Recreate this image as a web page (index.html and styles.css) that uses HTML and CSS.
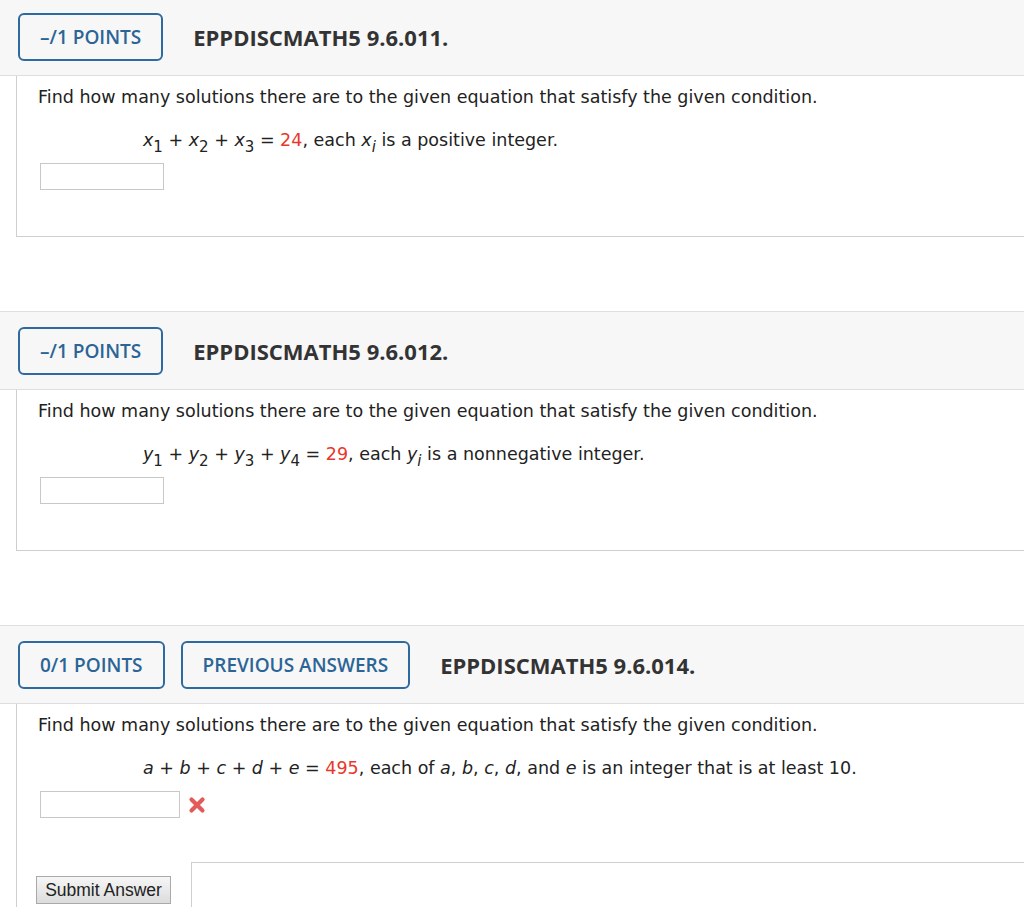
FILE: index.html
```html
<!DOCTYPE html>
<html lang="en">

<head>
    <meta charset="UTF-8">
    <meta name="viewport" content="width=device-width, initial-scale=1.0">
    <title>Assignment</title>
    <link rel="stylesheet" href="styles.css">
</head>

<body>
    <div class="page">
        <div class="question">
            <div class="q-head">
                <span class="tag">&ndash;/1 POINTS</span>
                <h3 class="q-title">EPPDISCMATH5 9.6.011.</h3>
            </div>
            <div class="q-body">
                <p class="prompt">Find how many solutions there are to the given equation that satisfy the given condition.</p>
                <p class="eq"><i>x</i><sub>1</sub> + <i>x</i><sub>2</sub> + <i>x</i><sub>3</sub> = <span class="red">24</span>, each <i>x<sub>i</sub></i> is a positive integer.</p>
                <div class="answer">
                    <input class="field" type="text">
                </div>
            </div>
        </div>

        <div class="question">
            <div class="q-head">
                <span class="tag">&ndash;/1 POINTS</span>
                <h3 class="q-title">EPPDISCMATH5 9.6.012.</h3>
            </div>
            <div class="q-body">
                <p class="prompt">Find how many solutions there are to the given equation that satisfy the given condition.</p>
                <p class="eq"><i>y</i><sub>1</sub> + <i>y</i><sub>2</sub> + <i>y</i><sub>3</sub> + <i>y</i><sub>4</sub> = <span class="red">29</span>, each <i>y<sub>i</sub></i> is a nonnegative integer.</p>
                <div class="answer">
                    <input class="field" type="text">
                </div>
            </div>
        </div>

        <div class="question">
            <div class="q-head">
                <span class="tag">0/1 POINTS</span>
                <span class="tag">PREVIOUS ANSWERS</span>
                <h3 class="q-title">EPPDISCMATH5 9.6.014.</h3>
            </div>
            <div class="q-body last">
                <p class="prompt">Find how many solutions there are to the given equation that satisfy the given condition.</p>
                <p class="eq"><i>a</i> + <i>b</i> + <i>c</i> + <i>d</i> + <i>e</i> = <span class="red">495</span>, each of <i>a</i>, <i>b</i>, <i>c</i>, <i>d</i>, and <i>e</i> is an integer that is at least 10.</p>
                <div class="answer">
                    <input class="field wide" type="text">
                    <svg class="wrong" width="18" height="18" viewBox="0 0 18 18">
                        <path d="M3.5 3.5 L14.5 14.5 M14.5 3.5 L3.5 14.5" stroke="#e35a5a" stroke-width="4.2" stroke-linecap="round"/>
                    </svg>
                </div>
                <div class="submit-row">
                    <button class="submit">Submit Answer</button>
                    <div class="feedback"></div>
                </div>
            </div>
        </div>
    </div>
</body>

</html>
```

FILE: styles.css
```css
body {
    margin: 0;
    background: #fff;
    font-family: "DejaVu Sans", Verdana, sans-serif;
    font-size: 17.5px;
    color: #222;
}

.page {
    margin-top: -3px;
}

.question {
    margin-bottom: 74px;
}

.q-head {
    display: flex;
    align-items: center;
    gap: 16px;
    padding: 15px 18px 14px;
    background: #f7f7f7;
    border-top: 1px solid #dedede;
    border-bottom: 1px solid #dedede;
}

.tag {
    box-sizing: border-box;
    display: flex;
    align-items: center;
    height: 48px;
    padding: 0 20px;
    border: 2px solid #2e6a9e;
    border-radius: 6px;
    font-family: "Open Sans", sans-serif;
    font-weight: 600;
    font-size: 19px;
    color: #2b6596;
}

.q-title {
    margin: 0 0 0 14px;
    font-family: "Open Sans", sans-serif;
    font-weight: 700;
    font-size: 22px;
    color: #333;
}

.q-body {
    margin-left: 16px;
    padding: 11px 0 46px 21px;
    border-left: 1px solid #cfcfcf;
    border-bottom: 1px solid #cfcfcf;
}

.q-body.last {
    border-bottom: none;
    padding-bottom: 0;
}

.prompt {
    margin: 0;
    line-height: 20px;
}

.eq {
    margin: 23px 0 0 105px;
    line-height: 20px;
}

.eq sub {
    line-height: 0;
    font-size: 15px;
    vertical-align: -6px;
}

.red {
    color: #e8382c;
}

.answer {
    display: flex;
    align-items: center;
    gap: 8px;
    margin: 13px 0 0 2px;
}

.field {
    box-sizing: border-box;
    width: 124px;
    height: 27px;
    margin: 0;
    border: 1px solid #c8c8c8;
    background: #fff;
}

.field.wide {
    width: 140px;
}

.submit-row {
    display: flex;
    align-items: flex-start;
    gap: 20px;
    margin-top: 44px;
}

.submit {
    box-sizing: border-box;
    width: 135px;
    height: 28px;
    margin: 14px 0 0 -2px;
    padding: 0;
    border: 1px solid #a9a9a9;
    background: linear-gradient(#f6f6f6, #dcdcdc);
    font-family: "Liberation Sans", Arial, sans-serif;
    font-size: 17.5px;
    color: #222;
}

.feedback {
    flex: 1;
    height: 60px;
    border-top: 1px solid #cfcfcf;
    border-left: 1px solid #cfcfcf;
}
```
